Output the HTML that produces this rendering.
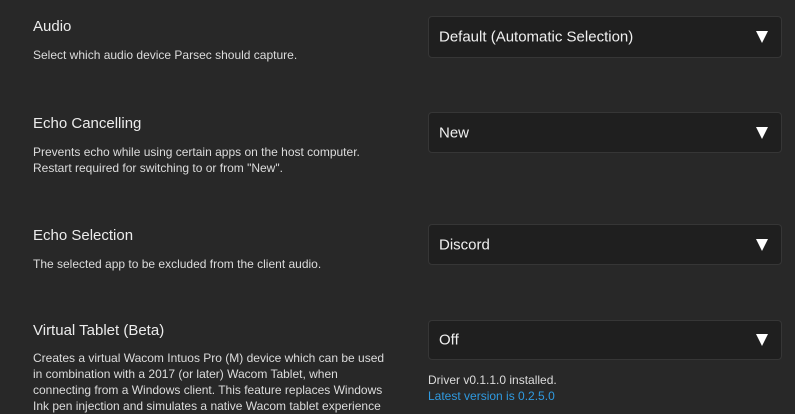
<!DOCTYPE html>
<html><head><style>
body{margin:0;width:795px;height:409px;background:#282828;overflow:hidden;font-family:"Liberation Sans",sans-serif;color:#e6e6e6;position:relative}
.t{position:absolute;left:33px;font-size:15px;color:#ececec;white-space:nowrap}
.d{position:absolute;left:33px;font-size:12px;line-height:16px;color:#dcdcdc;white-space:nowrap}
.s{position:absolute;left:428px;width:354px;background:#1f1f1f;border:1px solid #363636;border-radius:4px;box-sizing:border-box}
.s span{position:absolute;left:10px;top:50%;transform:translateY(-50%);font-size:15px;color:#f0f0f0}
.s i{position:absolute;right:13px;top:50%;margin-top:-6px;width:0;height:0;border-left:6.5px solid transparent;border-right:6.5px solid transparent;border-top:12px solid #fff}
</style></head><body>
<div class="t" style="top:18px">Audio</div>
<div class="d" style="top:47px">Select which audio device Parsec should capture.</div>
<div class="s" style="top:16px;height:42px"><span>Default (Automatic Selection)</span><i></i></div>

<div class="t" style="top:115px">Echo Cancelling</div>
<div class="d" style="top:144px">Prevents echo while using certain apps on the host computer.<br>Restart required for switching to or from "New".</div>
<div class="s" style="top:112px;height:41px"><span>New</span><i></i></div>

<div class="t" style="top:227px">Echo Selection</div>
<div class="d" style="top:256px">The selected app to be excluded from the client audio.</div>
<div class="s" style="top:224px;height:41px"><span>Discord</span><i></i></div>

<div class="t" style="top:322px">Virtual Tablet (Beta)</div>
<div class="d" style="top:350px">Creates a virtual Wacom Intuos Pro (M) device which can be used<br>in combination with a 2017 (or later) Wacom Tablet, when<br>connecting from a Windows client. This feature replaces Windows<br>Ink pen injection and simulates a native Wacom tablet experience</div>
<div class="s" style="top:320px;height:40px"><span>Off</span><i></i></div>
<div class="d" style="left:428px;top:372px">Driver v0.1.1.0 installed.</div>
<div class="d" style="left:428px;top:388px;color:#2f9ae0">Latest version is 0.2.5.0</div>
</body></html>
